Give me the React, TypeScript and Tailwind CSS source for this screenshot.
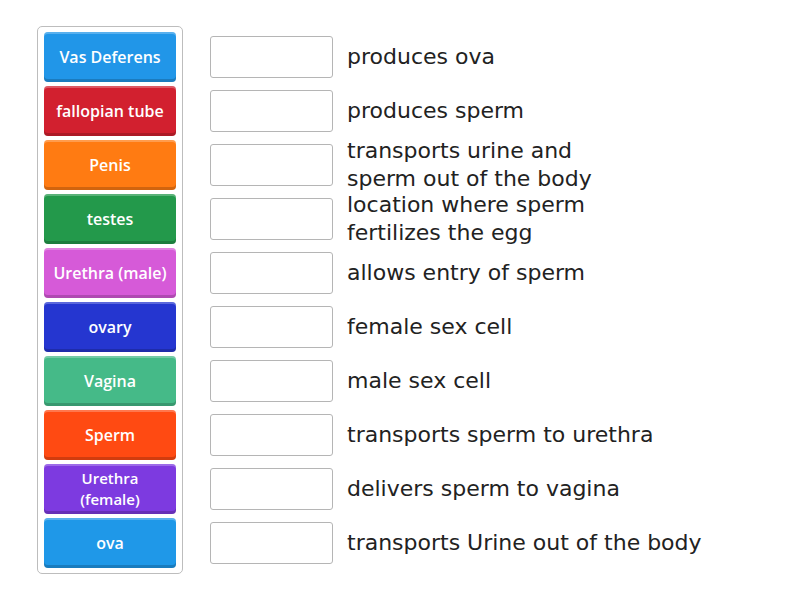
import React from 'react';

type Item = { label: React.ReactNode; bg: string; twoLine?: boolean };

const items: Item[] = [
  { label: 'Vas Deferens', bg: 'bg-[#2196e8]' },
  { label: 'fallopian tube', bg: 'bg-[#d2202f]' },
  { label: 'Penis', bg: 'bg-[#ff7b12]' },
  { label: 'testes', bg: 'bg-[#23994b]' },
  { label: 'Urethra (male)', bg: 'bg-[#d65ad8]' },
  { label: 'ovary', bg: 'bg-[#2536d0]' },
  { label: 'Vagina', bg: 'bg-[#45ba88]' },
  { label: 'Sperm', bg: 'bg-[#ff4a12]' },
  { label: <>Urethra<br />(female)</>, bg: 'bg-[#7d3ae0]', twoLine: true },
  { label: 'ova', bg: 'bg-[#1f98e8]' },
];

const definitions: React.ReactNode[] = [
  'produces ova',
  'produces sperm',
  <>transports urine and<br />sperm out of the body</>,
  <>location where sperm<br />fertilizes the egg</>,
  'allows entry of sperm',
  'female sex cell',
  'male sex cell',
  'transports sperm to urethra',
  'delivers sperm to vagina',
  'transports Urine out of the body',
];

export default function App() {
  return (
    <div className="w-[800px] h-[600px] bg-white">
      <div className="flex pt-[26px] pl-[37px]">
        {/* Draggable answer tiles */}
        <div className="flex flex-col gap-1 pt-[5px] pb-[5px] px-[6px] border border-[#bdbdbd] rounded-[5px] w-[146px] font-['Open_Sans',sans-serif]">
          {items.map((item, idx) => (
            <div
              key={idx}
              className={`${item.bg} h-[50px] rounded-[4px] flex items-center justify-center text-center text-white font-semibold shadow-[inset_0_2px_0_rgba(255,255,255,0.25),inset_0_-3px_0_rgba(0,0,0,0.18)] ${item.twoLine ? 'text-[15px] leading-[21px]' : 'text-[16px] leading-[22px]'}`}
            >
              <span>{item.label}</span>
            </div>
          ))}
        </div>

        {/* Drop targets with definitions */}
        <div className="flex flex-col gap-1 pt-[6px] ml-[27px] font-['DejaVu_Sans',sans-serif]">
          {definitions.map((def, idx) => (
            <div key={idx} className="h-[50px] flex items-center">
              <div className="w-[123px] h-[42px] border border-[#b5b5b5] rounded-[3px] bg-white shrink-0" />
              <div className="ml-[14px] text-[22px] leading-[28px] text-[#222]">{def}</div>
            </div>
          ))}
        </div>
      </div>
    </div>
  );
}
